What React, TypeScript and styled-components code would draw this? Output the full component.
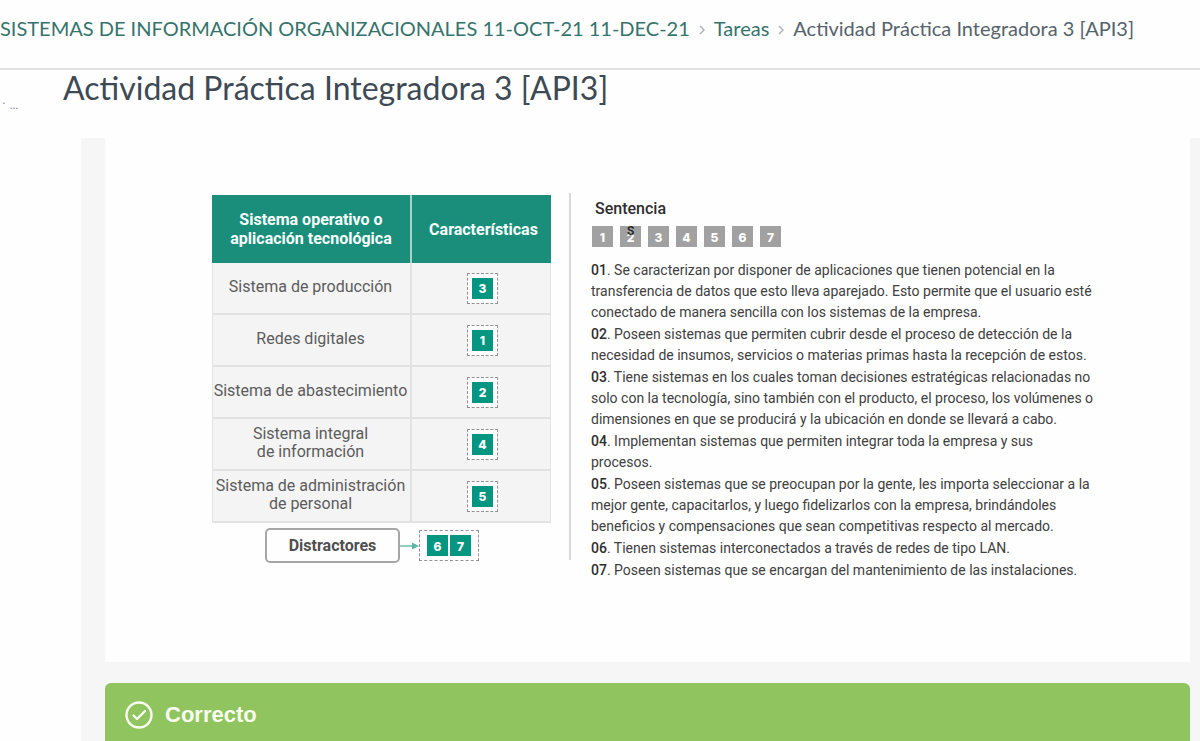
import React from "react";
import styled, { createGlobalStyle } from "styled-components";

const GlobalStyle = createGlobalStyle`
  * { box-sizing: border-box; }
  body { margin: 0; background: #fefefe; }
`;

const Page = styled.div`
  min-height: 100vh;
  display: flex;
  flex-direction: column;
  font-family: Roboto, "Liberation Sans", sans-serif;
`;

const Breadcrumb = styled.nav`
  height: 70px;
  padding-bottom: 12px;
  display: flex;
  align-items: center;
  gap: 9px;
  border-bottom: 2px solid #dfe1e2;
  font-family: Lato, sans-serif;
  font-size: 20px;
  line-height: 24px;
  color: #56636b;
  white-space: nowrap;
`;

const Crumb = styled.a`
  color: #35736b;
  text-decoration: none;
`;

const Chevron = styled.svg`
  width: 6px;
  height: 10px;
  margin-top: 4px;
  flex: none;
`;

const TitleRow = styled.header`
  height: 68px;
  display: flex;
  align-items: flex-start;
`;

const Truncated = styled.span`
  width: 63px;
  padding: 26px 0 0 2px;
  font-size: 14px;
  line-height: 16px;
  color: #8b9196;
`;

const Title = styled.h1`
  margin: 0;
  font-family: Lato, sans-serif;
  font-weight: 400;
  font-size: 32px;
  line-height: 36px;
  color: #3d4a54;
  white-space: nowrap;
`;

const Panel = styled.main`
  flex: 1;
  margin-left: 81px;
  padding: 0 10px 0 24px;
  background: #f6f6f6;
  display: flex;
  flex-direction: column;
  gap: 21px;
`;

const Card = styled.section`
  display: flex;
  align-items: flex-start;
  padding: 55px 24px 81px 107px;
  background: #fefefe;
`;

const Left = styled.div`
  flex: none;
  width: 339px;
  padding-top: 2px;
`;

const Matches = styled.table`
  width: 100%;
  table-layout: fixed;
  border-collapse: separate;
  border-spacing: 0;
  text-align: center;
`;

const HeadCell = styled.th<{ $first?: boolean }>`
  width: ${(p) => (p.$first ? "200px" : "auto")};
  height: 68px;
  padding: 0 0 0 ${(p) => (p.$first ? "0" : "4px")};
  background: #1b8e7b;
  border-right: ${(p) => (p.$first ? "2px solid #a5d2ca" : "0")};
  color: #f6fffd;
  font-weight: 700;
  font-size: 16px;
  line-height: 19px;
`;

const RowHead = styled.th`
  height: 52px;
  padding: 0 2px 2px 0;
  background: #f4f4f4;
  border: solid #e2e2e2;
  border-width: 0 2px 2px 1px;
  color: #5c5c5c;
  font-weight: 400;
  font-size: 16px;
  line-height: 18px;
  white-space: nowrap;
`;

const Cell = styled.td`
  height: 52px;
  padding: 0 0 0 3px;
  background: #f4f4f4;
  border: solid #e2e2e2;
  border-width: 0 1px 2px 0;
`;

const Slot = styled.div<{ $wide?: boolean }>`
  width: ${(p) => (p.$wide ? "60px" : "31px")};
  height: 31px;
  margin: ${(p) => (p.$wide ? "0" : "0 auto")};
  display: flex;
  align-items: center;
  justify-content: center;
  gap: 2px;
  background: #fefefe;
  border: 1px dashed #929292;
`;

const Tile = styled.span<{ $muted?: boolean }>`
  position: relative;
  flex: none;
  width: 21px;
  height: 21px;
  padding-top: 2px;
  display: flex;
  align-items: center;
  justify-content: center;
  background: ${(p) => (p.$muted ? "#a1a1a1" : "#049681")};
  color: #fff;
  font-family: Inter, Roboto, sans-serif;
  font-weight: 800;
  font-size: 12px;
  line-height: 14px;
`;

const Stray = styled.span`
  position: absolute;
  top: -2px;
  left: 7px;
  color: #2d2d2d;
  font-family: Roboto, sans-serif;
  font-weight: 700;
  font-size: 12px;
  line-height: 14px;
`;

const Distractors = styled.div`
  display: flex;
  align-items: center;
  margin: 5px 0 0 53px;
`;

const DistractorLabel = styled.div`
  width: 135px;
  height: 35px;
  display: flex;
  align-items: center;
  justify-content: center;
  border: 2px solid #a6a6a6;
  border-radius: 5px;
  color: #4f4f4f;
  font-weight: 700;
  font-size: 16px;
  line-height: 18px;
`;

const Arrow = styled.svg`
  width: 19px;
  height: 10px;
  flex: none;
`;

const Right = styled.div`
  flex: 1;
  min-width: 0;
  margin-left: 18px;
  display: flex;
`;

const Divider = styled.div`
  flex: none;
  width: 2px;
  height: 367px;
  background: #dadada;
`;

const Sentences = styled.div`
  padding: 6px 0 0 20px;
`;

const Heading = styled.h2`
  margin: 0 0 7px 4px;
  font-weight: 500;
  font-size: 16px;
  line-height: 20px;
  color: #2e2e2e;
`;

const Tiles = styled.div`
  display: flex;
  gap: 7px;
  padding-left: 1px;
  margin-bottom: 13px;
`;

const List = styled.ol`
  margin: 0;
  padding: 0;
  list-style: none;
  max-width: 504px;
  display: flex;
  flex-direction: column;
  gap: 1px;
  color: #404040;
  font-size: 14px;
  line-height: 21px;
`;

const Num = styled.b`
  font-weight: 500;
  color: #2e2e2e;
`;

const Banner = styled.div`
  flex: 1;
  min-height: 58px;
  display: flex;
  align-items: flex-start;
  gap: 12px;
  padding: 18px 20px;
  background: #90c45f;
  border-radius: 6px 6px 0 0;
  color: #f8fdf0;
  font-family: "Liberation Sans", sans-serif;
  font-weight: 700;
  font-size: 22px;
  line-height: 28px;
`;

const Check = styled.svg`
  width: 28px;
  height: 28px;
  flex: none;
`;

const rows: [string[], number][] = [
  [["Sistema de producción"], 3],
  [["Redes digitales"], 1],
  [["Sistema de abastecimiento"], 2],
  [["Sistema integral", "de información"], 4],
  [["Sistema de administración", "de personal"], 5],
];

const sentences = [
  "Se caracterizan por disponer de aplicaciones que tienen potencial en la transferencia de datos que esto lleva aparejado. Esto permite que el usuario esté conectado de manera sencilla con los sistemas de la empresa.",
  "Poseen sistemas que permiten cubrir desde el proceso de detección de la necesidad de insumos, servicios o materias primas hasta la recepción de estos.",
  "Tiene sistemas en los cuales toman decisiones estratégicas relacionadas no solo con la tecnología, sino también con el producto, el proceso, los volúmenes o dimensiones en que se producirá y la ubicación en donde se llevará a cabo.",
  "Implementan sistemas que permiten integrar toda la empresa y sus procesos.",
  "Poseen sistemas que se preocupan por la gente, les importa seleccionar a la mejor gente, capacitarlos, y luego fidelizarlos con la empresa, brindándoles beneficios y compensaciones que sean competitivas respecto al mercado.",
  "Tienen sistemas interconectados a través de redes de tipo LAN.",
  "Poseen sistemas que se encargan del mantenimiento de las instalaciones.",
];

const Separator = () => (
  <Chevron viewBox="0 0 6 10" aria-hidden="true">
    <path d="M1 1l4 4-4 4" fill="none" stroke="#a9afb3" strokeWidth="1.4" />
  </Chevron>
);

const Lines = ({ lines }: { lines: string[] }) => (
  <>
    {lines.map((line, i) => (
      <React.Fragment key={line}>
        {i > 0 && <br />}
        {line}
      </React.Fragment>
    ))}
  </>
);

export default function App() {
  return (
    <Page>
      <GlobalStyle />
      <Breadcrumb>
        <Crumb href="#curso">SISTEMAS DE INFORMACIÓN ORGANIZACIONALES 11-OCT-21 11-DEC-21</Crumb>
        <Separator />
        <Crumb href="#tareas">Tareas</Crumb>
        <Separator />
        <span>Actividad Práctica Integradora 3 [API3]</span>
      </Breadcrumb>
      <TitleRow>
        <Truncated>· …</Truncated>
        <Title>Actividad Práctica Integradora 3 [API3]</Title>
      </TitleRow>
      <Panel>
        <Card>
          <Left>
            <Matches>
              <thead>
                <tr>
                  <HeadCell $first scope="col">
                    <Lines lines={["Sistema operativo o", "aplicación tecnológica"]} />
                  </HeadCell>
                  <HeadCell scope="col">Características</HeadCell>
                </tr>
              </thead>
              <tbody>
                {rows.map(([lines, n]) => (
                  <tr key={n}>
                    <RowHead scope="row">
                      <Lines lines={lines} />
                    </RowHead>
                    <Cell>
                      <Slot>
                        <Tile>{n}</Tile>
                      </Slot>
                    </Cell>
                  </tr>
                ))}
              </tbody>
            </Matches>
            <Distractors>
              <DistractorLabel>Distractores</DistractorLabel>
              <Arrow viewBox="0 0 19 10" aria-hidden="true">
                <path d="M0 5h14" stroke="#6fbcab" strokeWidth="1.5" />
                <path d="M12 1.5L19 5l-7 3.500z" fill="#5fb3a1" />
              </Arrow>
              <Slot $wide>
                <Tile>6</Tile>
                <Tile>7</Tile>
              </Slot>
            </Distractors>
          </Left>
          <Right>
            <Divider />
            <Sentences>
              <Heading>Sentencia</Heading>
              <Tiles>
                {[1, 2, 3, 4, 5, 6, 7].map((n) => (
                  <Tile key={n} $muted>
                    {n}
                    {n === 2 && <Stray>S</Stray>}
                  </Tile>
                ))}
              </Tiles>
              <List>
                {sentences.map((text, i) => (
                  <li key={i}>
                    <Num>0{i + 1}</Num>. {text}
                  </li>
                ))}
              </List>
            </Sentences>
          </Right>
        </Card>
        <Banner role="status">
          <Check viewBox="0 0 28 28" aria-hidden="true">
            <circle cx="14" cy="14" r="12.500" fill="none" stroke="#f8fdf0" strokeWidth="2.400" />
            <path d="M8.500 14.500l3.500 3.500 8-8" fill="none" stroke="#f8fdf0" strokeWidth="2.400" strokeLinecap="round" strokeLinejoin="round" />
          </Check>
          Correcto
        </Banner>
      </Panel>
    </Page>
  );
}
